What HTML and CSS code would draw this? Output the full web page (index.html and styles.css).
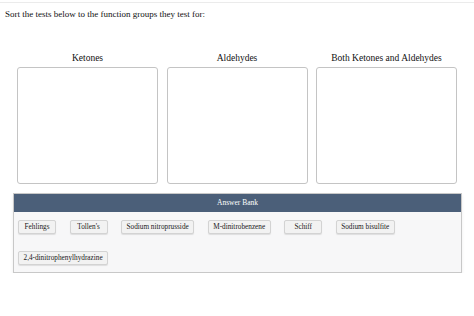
FILE: index.html
```html
<!DOCTYPE html>
<html lang="en">
<head>
    <meta charset="UTF-8">
    <meta name="viewport" content="width=device-width, initial-scale=1.0">
    <title>Sort the tests</title>
    <link rel="stylesheet" href="styles.css">
</head>
<body>
    <div class="page">
        <p class="prompt">Sort the tests below to the function groups they test for:</p>

        <div class="bins">
            <div class="bin">
                <div class="bin-title">Ketones</div>
                <div class="bin-box"></div>
            </div>
            <div class="bin">
                <div class="bin-title">Aldehydes</div>
                <div class="bin-box"></div>
            </div>
            <div class="bin">
                <div class="bin-title">Both Ketones and Aldehydes</div>
                <div class="bin-box"></div>
            </div>
        </div>

        <div class="bank">
            <div class="bank-header">Answer Bank</div>
            <div class="bank-body">
                <span class="chip">Fehlings</span>
                <span class="chip">Tollen's</span>
                <span class="chip">Sodium nitroprusside</span>
                <span class="chip">M-dinitrobenzene</span>
                <span class="chip">Schiff</span>
                <span class="chip">Sodium bisulfite</span>
                <span class="chip">2,4-dinitrophenylhydrazine</span>
            </div>
        </div>
    </div>
</body>
</html>
```

FILE: styles.css
```css
body {
    margin: 0;
    padding: 0;
    background-color: #fff;
    font-family: "Liberation Serif", "Times New Roman", serif;
    color: #111;
}

.page {
    margin-top: 2px;
    border-top: 1px solid #ebebeb;
    padding-top: 6px;
}

.prompt {
    margin: 0 0 0 5px;
    font-size: 9px;
    line-height: 11px;
}

.bins {
    display: grid;
    grid-template-columns: 141px 141px 141px;
    column-gap: 8.5px;
    margin: 32px 0 0 17px;
}

.bin-title {
    text-align: center;
    font-size: 9.5px;
    line-height: 12px;
    height: 15px;
}

.bin-box {
    height: 115px;
    border: 1px solid #c4c4c4;
    border-radius: 3px;
    background-color: #fff;
}

.bank {
    margin: 9px 12px 0 13px;
    border: 1px solid #c8c8c8;
    box-shadow: 0 2px 3px rgba(0, 0, 0, 0.08);
}

.bank-header {
    background-color: #4b5f79;
    color: #fff;
    text-align: center;
    font-size: 7.5px;
    height: 18px;
    line-height: 18px;
}

.bank-body {
    display: flex;
    flex-wrap: wrap;
    gap: 17px 13.5px;
    padding: 8px 5px 7px 4px;
    background-color: #f7f7f8;
}

.chip {
    min-width: 27px;
    height: 12px;
    line-height: 12px;
    padding: 0 4.5px;
    text-align: center;
    font-size: 7.25px;
    color: #1a1a1a;
    background-color: #f2f2f2;
    border: 1px solid #d3d3d3;
    border-radius: 2px;
    box-shadow: 0 1px 1px rgba(0, 0, 0, 0.1);
}
```
